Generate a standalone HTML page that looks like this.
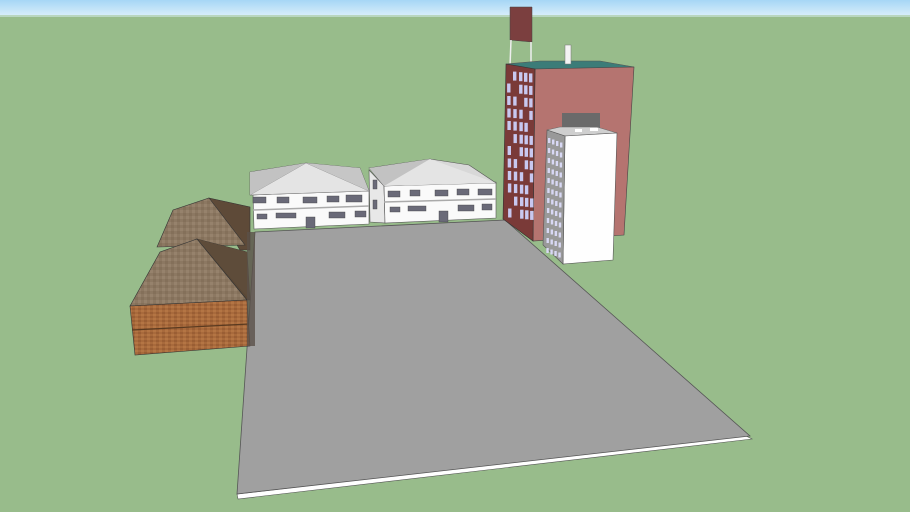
<!DOCTYPE html>
<html><head><meta charset="utf-8"><style>html,body{margin:0;padding:0;width:910px;height:512px;overflow:hidden;background:#98bc8b}</style></head>
<body>
<svg id="s" width="910" height="512" viewBox="0 0 910 512" xmlns="http://www.w3.org/2000/svg">
<defs>
<linearGradient id="sky" x1="0" y1="0" x2="0" y2="1"><stop offset="0" stop-color="#a6d6f6"/><stop offset="1" stop-color="#d9eefa"/></linearGradient>
<pattern id="brick" width="6" height="4" patternUnits="userSpaceOnUse"><rect width="6" height="4" fill="#a86a3c"/><rect x="0" y="0" width="3" height="2" fill="#9a5e34"/><rect x="3" y="2" width="3" height="2" fill="#b47544"/></pattern>
<pattern id="shing" width="6" height="6" patternUnits="userSpaceOnUse"><rect width="6" height="6" fill="#8c7862"/><rect x="0" y="0" width="3" height="3" fill="#96826c"/><rect x="3" y="3" width="3" height="3" fill="#84705a"/></pattern>
</defs>
<rect width="910" height="512" fill="#98bc8b"/>
<rect width="910" height="16" fill="url(#sky)"/>
<rect y="15" width="910" height="2" fill="#b9d6c0"/>

<!-- slab -->
<polygon points="237,494 744,435 752,439 238,499" fill="#fff" stroke="#555" stroke-width="0.6"/>
<polygon points="255,232 505,220 750,436 237,494" fill="#a0a0a0" stroke="#555" stroke-width="0.8"/>

<!-- white building 1 -->
<polygon points="253,195 369,190 369,224 254,229" fill="#fafafa" stroke="#555" stroke-width="0.6"/>
<line x1="253" y1="210" x2="369" y2="206" stroke="#aaa" stroke-width="1.5"/>
<polygon points="250,172 306,163 360,168 369,191 250,195" fill="#d8d8d8" stroke="#555" stroke-width="0.6"/>
<polygon points="306,163 369,191 250,195" fill="#e4e4e4" stroke="#777" stroke-width="0.5"/>
<polygon points="250,172 306,163 250,195" fill="#c2c2c2"/>
<polygon points="306,163 360,168 369,191" fill="#c6c6c6"/>
<g fill="#6a6a78" stroke="#444" stroke-width="0.4">
<rect x="253" y="197" width="13" height="6"/><rect x="277" y="197" width="12" height="6"/><rect x="303" y="197" width="14" height="6"/><rect x="327" y="196" width="12" height="6"/><rect x="346" y="195" width="16" height="7"/>
<rect x="257" y="214" width="10" height="5"/><rect x="276" y="213" width="20" height="5"/><rect x="329" y="212" width="16" height="6"/><rect x="355" y="211" width="11" height="6"/>
<rect x="306" y="217" width="9" height="11"/>
</g>
<!-- white building 2 -->
<polygon points="369,170 384,186 385,223 370,222" fill="#e8e8e8" stroke="#555" stroke-width="0.6"/>
<polygon points="384,186 496,182 496,218 385,223" fill="#fafafa" stroke="#555" stroke-width="0.6"/>
<line x1="384" y1="202" x2="496" y2="199" stroke="#aaa" stroke-width="1.5"/>
<polygon points="369,168 430,159 469,165 496,183 384,186" fill="#d8d8d8" stroke="#555" stroke-width="0.6"/>
<polygon points="430,159 496,183 384,186" fill="#e4e4e4"/>
<polygon points="369,168 430,159 384,186" fill="#c2c2c2"/>
<g fill="#6a6a78" stroke="#444" stroke-width="0.4">
<rect x="388" y="191" width="12" height="6"/><rect x="410" y="190" width="10" height="6"/><rect x="435" y="190" width="13" height="6"/><rect x="457" y="189" width="12" height="6"/><rect x="478" y="189" width="14" height="6"/>
<rect x="390" y="207" width="10" height="5"/><rect x="408" y="206" width="18" height="5"/><rect x="458" y="205" width="16" height="6"/><rect x="482" y="204" width="10" height="6"/>
<rect x="439" y="211" width="9" height="11"/>
<rect x="373" y="180" width="4" height="9"/><rect x="373" y="200" width="4" height="9"/>
</g>

<!-- brown back building -->
<polygon points="209,198 250,207 250,250 240,250" fill="#5e4a38" stroke="#333" stroke-width="0.6"/>
<polygon points="157,247 173,210 209,198 245,245" fill="url(#shing)" stroke="#333" stroke-width="0.6"/>
<!-- brown front building -->
<polygon points="197,239 247,252 250,300 247,300" fill="#5a4836" stroke="#333" stroke-width="0.6"/>
<polygon points="197,239 247,252 250,300" fill="#5e4c3a"/>
<polygon points="130,306 160,252 197,239 247,300" fill="url(#shing)" stroke="#333" stroke-width="0.6"/>
<polygon points="130,306 247,300 250,346 135,355" fill="url(#brick)" stroke="#333" stroke-width="0.6"/>
<line x1="132" y1="330" x2="249" y2="324" stroke="#5a3a20" stroke-width="1.2"/>
<rect x="247" y="232" width="8" height="114" fill="#5a5048" opacity="0.8"/>

<!-- tall building -->
<polygon points="510,7 532,7 532,42 510,40" fill="#7b3f3f" stroke="#444" stroke-width="0.5"/>
<line x1="511" y1="40" x2="510" y2="66" stroke="#eee" stroke-width="1.5"/>
<line x1="531" y1="42" x2="531" y2="68" stroke="#eee" stroke-width="1.5"/>
<polygon points="506,64 535,69 634,67 600,61 540,61" fill="#3c7c78" stroke="#555" stroke-width="0.6"/>
<rect x="565" y="45" width="6" height="19" fill="#f4f4f4" stroke="#777" stroke-width="0.5"/>
<polygon points="535,69 634,67 624,235 533,241" fill="#b57470" stroke="#444" stroke-width="0.6"/>
<polygon points="506,64 535,69 533,241 503,219" fill="#7a3a38" stroke="#333" stroke-width="0.6"/>
<g id="tw" fill="#c8c8f0"></g>

<!-- white tower -->
<rect x="562" y="113" width="38" height="16" fill="#6a6a6a"/>
<polygon points="547,130 565,136 617,133 597,127 560,127" fill="#cfcfcf" stroke="#666" stroke-width="0.5"/>
<rect x="575" y="129" width="7" height="3" fill="#fff"/><rect x="590" y="128" width="8" height="3" fill="#fff"/>
<polygon points="565,136 617,133 613,260 563,264" fill="#fefefe" stroke="#555" stroke-width="0.6"/>
<polygon points="547,130 565,136 563,264 543,245" fill="#999" stroke="#555" stroke-width="0.6"/>
<g id="gw" fill="#d8d8f4"></g>
</svg>
<script>
var ns="http://www.w3.org/2000/svg";
var tw=document.getElementById("tw");
var xs=[507,513,519,524,529];
for(var r=0;r<12;r++){for(var c=0;c<5;c++){if((r*7+c*3)%5==0)continue;var e=document.createElementNS(ns,"rect");e.setAttribute("x",xs[c]+(r*0.1));e.setAttribute("y",71+r*12.5+c*0.6);e.setAttribute("width",3.4);e.setAttribute("height",9);tw.appendChild(e);}}
var gw=document.getElementById("gw");
var gx=[548,552,556,560];
for(var r=0;r<12;r++){for(var c=0;c<4;c++){var e=document.createElementNS(ns,"rect");e.setAttribute("x",gx[c]-r*0.15);e.setAttribute("y",138+r*10+c*1.5);e.setAttribute("width",2.4);e.setAttribute("height",5);gw.appendChild(e);}}
</script>
</body></html>
